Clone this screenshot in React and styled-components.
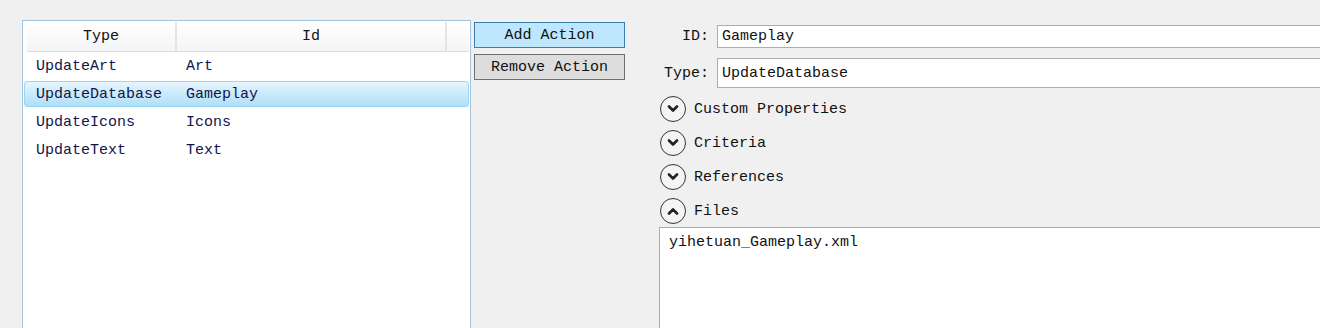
import styled, { createGlobalStyle } from 'styled-components'

var GlobalStyle = createGlobalStyle`
  html, body {
    margin: 0;
    padding: 0;
    background: #f0f0f0;
    overflow: hidden;
  }
  body {
    font-family: 'Liberation Mono', 'DejaVu Sans Mono', monospace;
    font-size: 15px;
    color: #111;
  }
`

var Window = styled.div`
  display: flex;
  align-items: flex-start;
  height: 328px;
  width: 1340px;
  overflow: hidden;
`

var ListBox = styled.div`
  margin: 20px 0 0 22px;
  width: 445px;
  height: 330px;
  border: 1px solid #a3c4de;
  background: #fff;
  padding: 1px 1px 0 1px;
  box-sizing: content-box;
`

var HeaderRow = styled.div`
  display: grid;
  grid-template-columns: 150px 270px 19px;
  margin-left: 3px;
  height: 29px;
  background: linear-gradient(#ffffff, #f3f4f6);
  border-bottom: 1px solid #dcdcdc;
`

var HeaderCell = styled.div`
  display: flex;
  align-items: center;
  justify-content: center;
  border-right: ${({ $last }) => ($last ? 'none' : '2px solid #e3e4e6')};
  color: #111;
`

var Row = styled.div`
  display: grid;
  grid-template-columns: 150px 270px;
  align-items: center;
  box-sizing: border-box;
  height: ${({ $selected }) => ($selected ? '26px' : '28px')};
  margin: ${({ $selected }) => ($selected ? '1px 0' : '0')};
  padding-left: 3px;
  border: 1px solid ${({ $selected }) => ($selected ? '#9bd6f5' : 'transparent')};
  border-radius: 3px;
  background: ${({ $selected }) =>
    $selected ? 'linear-gradient(#e6f5fd, #aedff8)' : 'transparent'};
  color: #14144a;
`

var Cell = styled.span`
  padding-left: 8px;
  white-space: nowrap;
`

var ButtonColumn = styled.div`
  display: flex;
  flex-direction: column;
  gap: 6px;
  margin: 22px 0 0 3px;
`

var ActionButton = styled.button`
  width: 151px;
  height: 26px;
  font: inherit;
  color: #111;
  padding: 0;
  border: 1px solid ${({ $active }) => ($active ? '#3c7fb1' : '#707070')};
  background: ${({ $active }) => ($active ? '#bee6fd' : '#dddddd')};
`

var Details = styled.div`
  flex: 1;
  margin: 25px 0 0 34px;
  display: flex;
  flex-direction: column;
`

var FieldRow = styled.div`
  display: grid;
  grid-template-columns: 50px 1fr;
  column-gap: 8px;
  align-items: center;
  margin-bottom: ${({ $gap }) => $gap || 0}px;
`

var FieldLabel = styled.label`
  text-align: right;
  color: #111;
`

var TextBox = styled.div`
  height: ${({ $h }) => $h}px;
  box-sizing: border-box;
  border: 1px solid #abadb3;
  background: #fff;
  display: flex;
  align-items: center;
  padding-left: 4px;
`

var Expander = styled.div`
  display: flex;
  align-items: center;
  height: 34px;
  gap: 8px;
  margin-left: 1px;
`

var ToggleCircle = styled.span`
  width: 26px;
  height: 26px;
  box-sizing: border-box;
  border: 1.5px solid #333;
  border-radius: 50%;
  display: flex;
  align-items: center;
  justify-content: center;
  background: #f4f4f4;
`

var FilesBox = styled.div`
  height: 120px;
  margin-top: -1px;
  border: 1px solid #abadb3;
  background: #fff;
  padding: 6px 0 0 9px;
`

function Chevron({ up }) {
  return (
    <svg width="12" height="8" viewBox="0 0 12 8">
      <path
        d={up ? 'M2 6.5 L6 2.5 L10 6.5' : 'M2 1.5 L6 5.5 L10 1.5'}
        fill="none"
        stroke="#222"
        strokeWidth="2.6"
        strokeLinecap="round"
        strokeLinejoin="round"
      />
    </svg>
  )
}

var actions = [
  { type: 'UpdateArt', id: 'Art' },
  { type: 'UpdateDatabase', id: 'Gameplay', selected: true },
  { type: 'UpdateIcons', id: 'Icons' },
  { type: 'UpdateText', id: 'Text' },
]

var sections = [
  { title: 'Custom Properties' },
  { title: 'Criteria' },
  { title: 'References' },
  { title: 'Files', open: true },
]

function App() {
  return (
    <Window>
      <GlobalStyle />
      <ListBox>
        <HeaderRow>
          <HeaderCell>Type</HeaderCell>
          <HeaderCell>Id</HeaderCell>
          <HeaderCell $last />
        </HeaderRow>
        {actions.map((a) => (
          <Row key={a.type} $selected={a.selected}>
            <Cell>{a.type}</Cell>
            <Cell>{a.id}</Cell>
          </Row>
        ))}
      </ListBox>

      <ButtonColumn>
        <ActionButton $active>Add Action</ActionButton>
        <ActionButton>Remove Action</ActionButton>
      </ButtonColumn>

      <Details>
        <FieldRow $gap={10}>
          <FieldLabel>ID:</FieldLabel>
          <TextBox $h={23}>Gameplay</TextBox>
        </FieldRow>
        <FieldRow $gap={4}>
          <FieldLabel>Type:</FieldLabel>
          <TextBox $h={30}>UpdateDatabase</TextBox>
        </FieldRow>
        {sections.map((s) => (
          <Expander key={s.title}>
            <ToggleCircle>
              <Chevron up={s.open} />
            </ToggleCircle>
            {s.title}
          </Expander>
        ))}
        <FilesBox>yihetuan_Gameplay.xml</FilesBox>
      </Details>
    </Window>
  )
}

export default App
